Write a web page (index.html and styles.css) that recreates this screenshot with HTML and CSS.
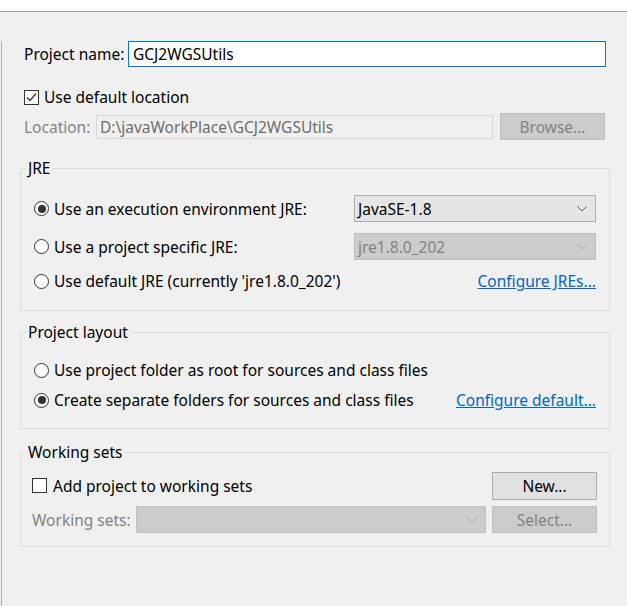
FILE: index.html
```html
<!DOCTYPE html>
<html>
    <head>
        <link rel="stylesheet" href="styles.css">
        <title>New Java Project</title>
    </head>
    <body>
        <div class="titlebar"></div>
        <div class="main">
            <div class="row name-row">
                <span class="lbl name-lbl">Project name:</span>
                <div class="textbox focused">GCJ2WGSUtils</div>
            </div>
            <div class="row check-row">
                <span class="check">
                    <svg width="13" height="13" viewBox="0 0 13 13"><polyline points="2,6.5 5,9.5 11,2.5" fill="none" stroke="#333" stroke-width="1.2"/></svg>
                </span>
                <span>Use default location</span>
            </div>
            <div class="row loc-row">
                <span class="lbl loc-lbl disabled">Location:</span>
                <div class="textbox readonly">D:\javaWorkPlace\GCJ2WGSUtils</div>
                <div class="btn disabled browse">Browse...</div>
            </div>

            <fieldset class="group">
                <legend>JRE</legend>
                <div class="group-body jre">
                    <div class="opt-row tall">
                        <span class="radio checked"></span>
                        <span>Use an execution environment JRE:</span>
                        <div class="combo">
                            <span>JavaSE-1.8</span>
                            <svg width="10" height="6" viewBox="0 0 10 6"><polyline points="0.5,0.5 5,5 9.5,0.5" fill="none" stroke="#606060" stroke-width="1"/></svg>
                        </div>
                    </div>
                    <div class="opt-row tall">
                        <span class="radio"></span>
                        <span>Use a project specific JRE:</span>
                        <div class="combo disabled">
                            <span>jre1.8.0_202</span>
                            <svg width="10" height="6" viewBox="0 0 10 6"><polyline points="0.5,0.5 5,5 9.5,0.5" fill="none" stroke="#a8a8a8" stroke-width="1"/></svg>
                        </div>
                    </div>
                    <div class="opt-row">
                        <span class="radio"></span>
                        <span>Use default JRE (currently 'jre1.8.0_202')</span>
                        <a class="link" href="#">Configure JREs...</a>
                    </div>
                </div>
            </fieldset>

            <fieldset class="group layout-group">
                <legend>Project layout</legend>
                <div class="group-body layout">
                    <div class="opt-row">
                        <span class="radio"></span>
                        <span>Use project folder as root for sources and class files</span>
                    </div>
                    <div class="opt-row">
                        <span class="radio checked"></span>
                        <span>Create separate folders for sources and class files</span>
                        <a class="link" href="#">Configure default...</a>
                    </div>
                </div>
            </fieldset>

            <fieldset class="group wsets-group">
                <legend>Working sets</legend>
                <div class="group-body wsets">
                    <div class="opt-row tall">
                        <span class="check empty"></span>
                        <span>Add project to working sets</span>
                        <div class="btn new">New...</div>
                    </div>
                    <div class="opt-row tall">
                        <span class="lbl ws-lbl disabled">Working sets:</span>
                        <div class="combo disabled wide">
                            <span></span>
                            <svg width="10" height="6" viewBox="0 0 10 6"><polyline points="0.5,0.5 5,5 9.5,0.5" fill="none" stroke="#a8a8a8" stroke-width="1"/></svg>
                        </div>
                        <div class="btn disabled select">Select...</div>
                    </div>
                </div>
            </fieldset>
        </div>
    </body>
</html>
```

FILE: styles.css
```css
body {
    margin: 0;
    background-color: #f0f0f0;
    color: #000;
    font-family: "Noto Sans", "Open Sans", sans-serif;
    font-size: 15.5px;
    line-height: 20px;
}
.titlebar {
    height: 11px;
    background-color: #fff;
    border-bottom: 1px solid #a0a0a0;
}
.main {
    margin-left: 1px;
    border-left: 1px solid #a7b3c4;
    padding: 0 17px 60px 18px;
}
.row {
    display: flex;
    align-items: center;
    margin: 0 4px;
}
.name-row {
    margin-top: 29px;
    height: 26px;
}
.check-row {
    margin-top: 20px;
    height: 20px;
}
.loc-row {
    margin-top: 6px;
    height: 27px;
    margin-right: 5px;
}
.lbl {
    white-space: nowrap;
}
.name-lbl {
    width: 104px;
    flex: none;
}
.loc-lbl {
    width: 72px;
    flex: none;
}
.ws-lbl {
    width: 104px;
    flex: none;
}
.disabled {
    color: #838383;
}
.textbox {
    flex: 1;
    box-sizing: border-box;
    height: 26px;
    padding: 2px 4px;
    background-color: #fff;
    border: 1px solid #7a7a7a;
}
.textbox.focused {
    border-color: #0078d7;
}
.textbox.readonly {
    height: 24px;
    padding: 1px 3px;
    background-color: #f0f0f0;
    border-color: #d7d7d7;
    color: #6d6d6d;
}
.check {
    box-sizing: border-box;
    width: 15px;
    height: 15px;
    margin-right: 5px;
    border: 1px solid #333;
    background-color: #fff;
    display: flex;
    align-items: center;
    justify-content: center;
    flex: none;
}
.check.empty {
    margin-right: 6px;
}
.btn {
    box-sizing: border-box;
    height: 27px;
    width: 105px;
    flex: none;
    display: flex;
    align-items: center;
    justify-content: center;
    background-color: #e1e1e1;
    border: 1px solid #adadad;
}
.btn.disabled {
    background-color: #cccccc;
    border-color: #bfbfbf;
}
.browse {
    margin-left: 7px;
}
.new {
    margin-left: auto;
    height: 28px;
}
.select {
    margin-left: 6px;
}
.group {
    margin: 18px 0 0;
    padding: 0;
    min-width: 0;
    border: 1px solid #dcdcdc;
}
.group legend {
    margin-left: 5px;
    padding: 0 2px;
    line-height: 20px;
}
.layout-group {
    margin-top: 11px;
}
.wsets-group {
    margin-top: 13px;
}
.jre {
    padding: 17px 13px 19px 13px;
}
.layout {
    padding: 18px 13px 18px 13px;
}
.wsets {
    padding: 10px 12px 13px 11px;
}
.opt-row {
    display: flex;
    align-items: center;
    height: 20px;
    white-space: nowrap;
}
.opt-row.tall {
    height: 27px;
}
.jre .opt-row + .opt-row {
    margin-top: 11px;
}
.layout .opt-row + .opt-row {
    margin-top: 10px;
}
.wsets .opt-row + .opt-row {
    margin-top: 7px;
}
.radio {
    box-sizing: border-box;
    width: 15px;
    height: 15px;
    margin-right: 5px;
    border: 1px solid #333;
    border-radius: 50%;
    background-color: #fff;
    display: flex;
    align-items: center;
    justify-content: center;
    flex: none;
}
.radio.checked::after {
    content: "";
    width: 8px;
    height: 8px;
    border-radius: 50%;
    background-color: #333;
}
.combo {
    box-sizing: border-box;
    margin-left: auto;
    width: 242px;
    height: 27px;
    padding: 0 8px 0 3px;
    display: flex;
    align-items: center;
    justify-content: space-between;
    background-color: #e5e5e5;
    border: 1px solid #adadad;
}
.combo.disabled {
    background-color: #cccccc;
    border-color: #bfbfbf;
}
.combo.wide {
    margin-left: 0;
    width: auto;
    flex: 1;
}
.link {
    margin-left: auto;
    color: #0066cc;
    text-decoration: underline;
}
```
